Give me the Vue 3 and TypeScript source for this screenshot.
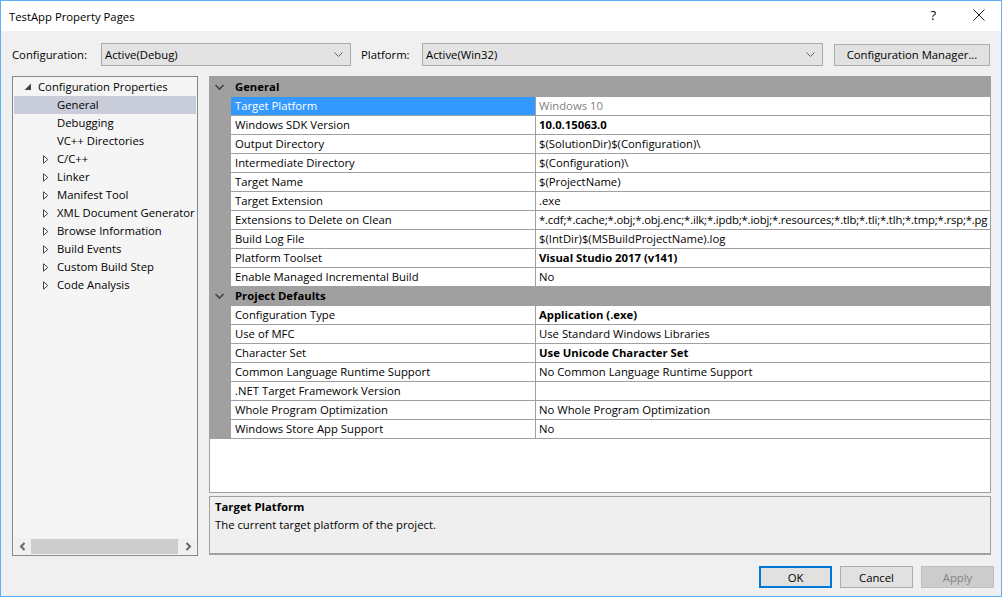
<template>
  <div class="dialog">
    <div class="title-bar">
      <span class="title">TestApp Property Pages</span>
      <span class="help">?</span>
      <svg class="close" width="14" height="14" viewBox="0 0 14 14">
        <path d="M1.5 1.5 L12.5 12.5 M12.5 1.5 L1.5 12.5" stroke="#222" stroke-width="1" fill="none" />
      </svg>
    </div>

    <div class="toolbar">
      <label class="cfg-label">Configuration:</label>
      <div class="combo combo--config">
        <span>Active(Debug)</span>
        <svg class="combo-arrow" width="9" height="6" viewBox="0 0 9 6"><path d="M0.5 0.5 L4.5 4.5 L8.5 0.5" stroke="#666" fill="none" /></svg>
      </div>
      <label class="plat-label">Platform:</label>
      <div class="combo combo--platform">
        <span>Active(Win32)</span>
        <svg class="combo-arrow" width="9" height="6" viewBox="0 0 9 6"><path d="M0.5 0.5 L4.5 4.5 L8.5 0.5" stroke="#666" fill="none" /></svg>
      </div>
      <button class="btn btn--manager">Configuration Manager...</button>
    </div>

    <div class="main">
      <div class="tree">
        <div class="tree-list">
          <div class="tree-row tree-row--root">
            <svg class="tw" width="9" height="9" viewBox="0 0 9 9"><path d="M8 1.5 V8 H1.5 Z" fill="#444" /></svg>
            Configuration Properties
          </div>
          <div
            v-for="item in treeItems"
            :key="item.label"
            class="tree-row"
            :class="{ 'tree-row--selected': item.label === 'General' }"
          >
            <svg v-if="item.more" class="tw tw--child" width="7" height="9" viewBox="0 0 7 9"><path d="M1.5 0.8 L5.8 4.5 L1.5 8.2 Z" fill="#fff" stroke="#444" /></svg>
            <span class="tree-label">{{ item.label }}</span>
          </div>
        </div>
        <div class="hscroll">
          <svg width="7" height="9" viewBox="0 0 7 9"><path d="M5.5 1 L2 4.5 L5.5 8" stroke="#666" stroke-width="2" fill="none" /></svg>
          <div class="thumb"></div>
          <svg width="7" height="9" viewBox="0 0 7 9"><path d="M1.5 1 L5 4.5 L1.5 8" stroke="#666" stroke-width="2" fill="none" /></svg>
        </div>
      </div>

      <div class="right">
        <div class="grid">
          <template v-for="group in groups" :key="group.name">
            <div class="group-head">
              <svg class="group-arrow" width="11" height="7" viewBox="0 0 11 7"><path d="M1.5 1 L5.5 5 L9.5 1" stroke="#444" stroke-width="1.6" fill="none" /></svg>
              {{ group.name }}
            </div>
            <div v-for="row in group.rows" :key="row.name" class="prop">
              <div class="prop-name" :class="{ 'prop-name--selected': row.selected }">{{ row.name }}</div>
              <div
                class="prop-value"
                :class="{ 'prop-value--bold': row.bold, 'prop-value--dim': row.dim, 'prop-value--tight': row.tight }"
              >{{ row.value }}</div>
            </div>
          </template>
        </div>
        <div class="desc">
          <div class="desc-title">Target Platform</div>
          <div>The current target platform of the project.</div>
        </div>
      </div>
    </div>

    <div class="footer">
      <button class="btn btn--action btn--default">OK</button>
      <button class="btn btn--action">Cancel</button>
      <button class="btn btn--action btn--disabled">Apply</button>
    </div>
  </div>
</template>

<script setup lang="ts">
type Row = { name: string; value: string; bold?: boolean; dim?: boolean; selected?: boolean; tight?: boolean }

const treeItems = [
  { label: 'General' },
  { label: 'Debugging' },
  { label: 'VC++ Directories' },
  { label: 'C/C++', more: true },
  { label: 'Linker', more: true },
  { label: 'Manifest Tool', more: true },
  { label: 'XML Document Generator', more: true },
  { label: 'Browse Information', more: true },
  { label: 'Build Events', more: true },
  { label: 'Custom Build Step', more: true },
  { label: 'Code Analysis', more: true },
]

const groups: { name: string; rows: Row[] }[] = [
  {
    name: 'General',
    rows: [
      { name: 'Target Platform', value: 'Windows 10', dim: true, selected: true },
      { name: 'Windows SDK Version', value: '10.0.15063.0', bold: true },
      { name: 'Output Directory', value: '$(SolutionDir)$(Configuration)\\' },
      { name: 'Intermediate Directory', value: '$(Configuration)\\' },
      { name: 'Target Name', value: '$(ProjectName)' },
      { name: 'Target Extension', value: '.exe' },
      { name: 'Extensions to Delete on Clean', value: '*.cdf;*.cache;*.obj;*.obj.enc;*.ilk;*.ipdb;*.iobj;*.resources;*.tlb;*.tli;*.tlh;*.tmp;*.rsp;*.pg', tight: true },
      { name: 'Build Log File', value: '$(IntDir)$(MSBuildProjectName).log' },
      { name: 'Platform Toolset', value: 'Visual Studio 2017 (v141)', bold: true },
      { name: 'Enable Managed Incremental Build', value: 'No' },
    ],
  },
  {
    name: 'Project Defaults',
    rows: [
      { name: 'Configuration Type', value: 'Application (.exe)', bold: true },
      { name: 'Use of MFC', value: 'Use Standard Windows Libraries' },
      { name: 'Character Set', value: 'Use Unicode Character Set', bold: true },
      { name: 'Common Language Runtime Support', value: 'No Common Language Runtime Support' },
      { name: '.NET Target Framework Version', value: '' },
      { name: 'Whole Program Optimization', value: 'No Whole Program Optimization' },
      { name: 'Windows Store App Support', value: 'No' },
    ],
  },
]
</script>

<style>
html, body { margin: 0; }
</style>

<style scoped>
.dialog {
  width: 1002px;
  height: 597px;
  box-sizing: border-box;
  border: 1px solid #5fb0f7;
  background: #f0f0f0;
  display: flex;
  flex-direction: column;
  font-family: "Open Sans", "Noto Sans", sans-serif;
  font-size: 11.3px;
  color: #000;
  overflow: hidden;
}

.title-bar {
  height: 30px;
  flex: none;
  background: #fff;
  display: flex;
  align-items: center;
  padding: 0 15px 0 8px;
  font-size: 11.3px;
}
.title { flex: 1; }
.help { font-size: 13px; margin-right: 36px; margin-top: -2px; }
.close { margin-top: -2px; }

.toolbar {
  height: 45px;
  flex: none;
  display: flex;
  align-items: center;
  padding: 2px 11px 0;
  box-sizing: border-box;
}
.cfg-label { width: 89px; }
.plat-label { width: 61px; }
.combo {
  height: 23px;
  box-sizing: border-box;
  border: 1px solid #aaa;
  background: #e3e3e3;
  display: flex;
  align-items: center;
  justify-content: space-between;
  padding: 0 7px 0 3px;
}
.combo--config { width: 250px; margin-right: 10px; }
.combo--platform { width: 401px; margin-right: 11px; }

.btn {
  font: inherit;
  color: inherit;
  height: 22px;
  box-sizing: border-box;
  border: 1px solid #adadad;
  background: #e1e1e1;
  padding: 0;
}
.btn--manager { width: 156px; }
.btn--action { width: 73px; height: 22px; }
.btn--default { border: 2px solid #0078d7; }
.btn--disabled { background: #ccc; border-color: #bfbfbf; color: #838383; }

.main {
  flex: none;
  height: 480px;
  display: flex;
  padding: 0 10px 0 11px;
  gap: 11px;
}

.tree {
  width: 186px;
  height: 480px;
  box-sizing: border-box;
  border: 1px solid #828790;
  background: #f5f5f5;
  padding: 1px;
  display: flex;
  flex-direction: column;
}
.tree-list { flex: 1; overflow: hidden; }
.tree-row {
  height: 18px;
  line-height: 18px;
  padding-left: 43px;
  position: relative;
  white-space: nowrap;
  overflow: hidden;
}
.tree-row--root { padding-left: 24px; }
.tree-row--selected { background: #c9ccd9; }
.tw { position: absolute; left: 9px; top: 4px; }
.tw--child { left: 28px; top: 5px; }

.hscroll {
  height: 16px;
  flex: none;
  background: #f0f0f0;
  display: flex;
  align-items: center;
  justify-content: space-between;
  padding: 0 4px 0 5px;
}
.thumb { width: 147px; height: 15px; background: #cdcdcd; margin-left: 0; margin-right: 2px; }

.right { width: 782px; display: flex; flex-direction: column; }

.grid {
  height: 417px;
  flex: none;
  box-sizing: border-box;
  background: #fff;
  border-right: 1px solid #a0a0a0;
  border-bottom: 1px solid #a0a0a0;
  border-left: 1px solid #a0a0a0;
  overflow: hidden;
}
.group-head {
  height: 19px;
  line-height: 18px;
  background: #a0a0a0;
  font-weight: 700;
  padding-left: 26px;
  position: relative;
  margin-left: -1px;
  margin-right: -1px;
}
.group-head:first-child { height: 21px; line-height: 21px; }
.group-arrow { position: absolute; left: 5px; top: 6px; }
.group-head:first-child .group-arrow { top: 8px; }

.prop {
  height: 19px;
  line-height: 18px;
  display: flex;
  box-sizing: border-box;
  border-bottom: 1px solid #a0a0a0;
  margin-left: 21px;
  position: relative;
}
.prop::before {
  content: "";
  position: absolute;
  left: -22px;
  width: 22px;
  top: 0;
  bottom: -1px;
  background: #a0a0a0;
}
.prop-name {
  width: 305px;
  flex: none;
  box-sizing: border-box;
  padding-left: 4px;
  border-right: 1px solid #a0a0a0;
  white-space: nowrap;
}
.prop-name--selected { background: #3399ff; color: #fff; }
.prop-value {
  flex: 1;
  padding-left: 3px;
  white-space: nowrap;
  overflow: hidden;
}
.prop-value--bold { font-weight: 700; }
.prop-value--dim { color: #808080; }
.prop-value--tight { letter-spacing: -0.16px; }

.desc {
  height: 59px;
  margin-top: 3px;
  flex: none;
  box-sizing: border-box;
  border: 1px solid #a0a0a0;
  border-bottom-width: 2px;
  background: #efefef;
  padding: 1px 5px;
  line-height: 18px;
}
.desc-title { font-weight: 700; }

.footer {
  flex: 1;
  display: flex;
  justify-content: flex-end;
  align-items: flex-start;
  gap: 8px;
  padding: 10px 7px 0 0;
}
</style>
